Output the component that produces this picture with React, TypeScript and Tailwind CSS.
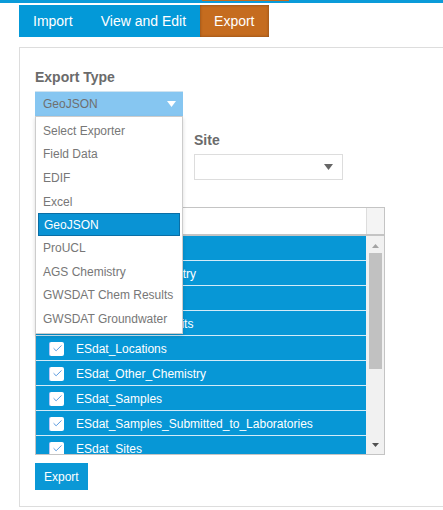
import { Check } from 'lucide-react';

const exporters = [
  'Select Exporter',
  'Field Data',
  'EDIF',
  'Excel',
  'GeoJSON',
  'ProUCL',
  'AGS Chemistry',
  'GWSDAT Chem Results',
  'GWSDAT Groundwater',
];

const tables = [
  'ESdat_Chemistry',
  'ESdat_Lab_Chemistry',
  'ESdat_Gauging',
  'ESdat_Method_Limits',
  'ESdat_Locations',
  'ESdat_Other_Chemistry',
  'ESdat_Samples',
  'ESdat_Samples_Submitted_to_Laboratories',
  'ESdat_Sites',
];

function Caret({ className }: { className: string }) {
  return (
    <svg width="9" height="6" viewBox="0 0 9 6" className={className}>
      <path d="M0 0h9L4.5 6z" fill="currentColor" />
    </svg>
  );
}

export default function App() {
  return (
    <div className="w-[443px] h-[510px] overflow-hidden bg-white font-['Liberation_Sans',Arial,sans-serif]">
      {/* top strip */}
      <div className="relative h-[3px] bg-[#0a9bd9]">
        <div className="absolute left-[202px] top-0 w-[87px] h-px bg-[#c56c1f]" />
      </div>

      {/* tabs */}
      <div className="flex mt-[2px] ml-[19px] h-[32px] text-[14px] text-white">
        <div className="flex items-center px-[14px] bg-[#0399d8]">Import</div>
        <div className="flex items-center px-[14px] bg-[#0399d8]">View and Edit</div>
        <div className="flex items-center px-[14px] bg-[#c56c1f] shadow-[inset_0_0_3px_rgba(0,0,0,0.35)]">
          Export
        </div>
      </div>

      {/* panel */}
      <div className="mt-[10px] ml-[19px] w-[440px] h-[460px] border border-[#dddddd] pl-[15px] pt-[19px]">
        <div className="text-[14px] leading-[20px] font-bold text-[#6b6b6b]">Export Type</div>
        <div className="relative mt-[4px] w-[148px] z-10">
          <div className="flex items-center justify-between h-[25px] pl-[8px] pr-[7px] bg-[#86c6f1] border-t border-[#cfe3f0] text-[12px] text-[#6f6f6f]">
            <span>GeoJSON</span>
            <Caret className="text-white" />
          </div>
          <div className="absolute left-0 top-full w-full bg-white border border-[#cccccc] shadow-[0_2px_4px_rgba(0,0,0,0.15)] pt-[2px] pb-[2px]">
            {exporters.map((name) =>
              name === 'GeoJSON' ? (
                <div
                  key={name}
                  className="mx-[2px] h-[23px] flex items-center pl-[5px] bg-[#0a93d4] border border-[#0a6ea5] text-[12px] text-white"
                >
                  {name}
                </div>
              ) : (
                <div key={name} className="h-[23.6px] flex items-center pl-[7px] text-[12px] text-[#777777]">
                  {name}
                </div>
              )
            )}
          </div>
        </div>

        {/* second row */}
        <div className="flex gap-[11px] mt-[14px]">
          <div className="w-[148px]" />
          <div className="w-[149px]">
            <div className="text-[14px] leading-[20px] font-bold text-[#6b6b6b]">Site</div>
            <div className="mt-[4px] h-[26px] border border-[#dddddd] flex items-center justify-end pr-[9px]">
              <Caret className="text-[#666666]" />
            </div>
          </div>
        </div>

        {/* table list */}
        <div className="mt-[27px] w-[350px] border border-[#c4c4c4]">
          <div className="flex h-[28px] border-b-2 border-[#c4c4c4]">
            <div className="flex-1" />
            <div className="w-[18px] bg-[#f4f4f4] border-l border-[#dddddd]" />
          </div>
          <div className="flex h-[218px]">
            <div className="flex-1 overflow-hidden">
              {tables.map((t) => (
                <div
                  key={t}
                  className="flex items-center h-[25px] border-b border-[#d3ebf8] bg-[#0797d6] pl-[13px] pt-px text-[12px] text-white"
                >
                  <span className="flex items-center justify-center w-[15px] h-[14px] rounded-[2px] bg-white border-l border-[#b9c6f5]">
                    <Check className="w-[11px] h-[11px] text-[#4a8fdc]" strokeWidth={2} />
                  </span>
                  <span className="ml-[12px] whitespace-nowrap">{t}</span>
                </div>
              ))}
            </div>
            <div className="w-[18px] bg-[#f1f1f1] flex flex-col items-center pt-[8px] pb-[7px]">
              <svg width="7" height="4" viewBox="0 0 7 4">
                <path d="M0 4h7L3.5 0z" fill="#a3a3a3" />
              </svg>
              <div className="mt-[5px] w-[13px] h-[116px] bg-[#c1c1c1]" />
              <div className="flex-1" />
              <svg width="7" height="4" viewBox="0 0 7 4">
                <path d="M0 0h7L3.5 4z" fill="#505050" />
              </svg>
            </div>
          </div>
        </div>

        <button className="mt-[8px] h-[27px] px-[9px] bg-[#0a98d6] text-[12px] text-white">Export</button>
      </div>
    </div>
  );
}
